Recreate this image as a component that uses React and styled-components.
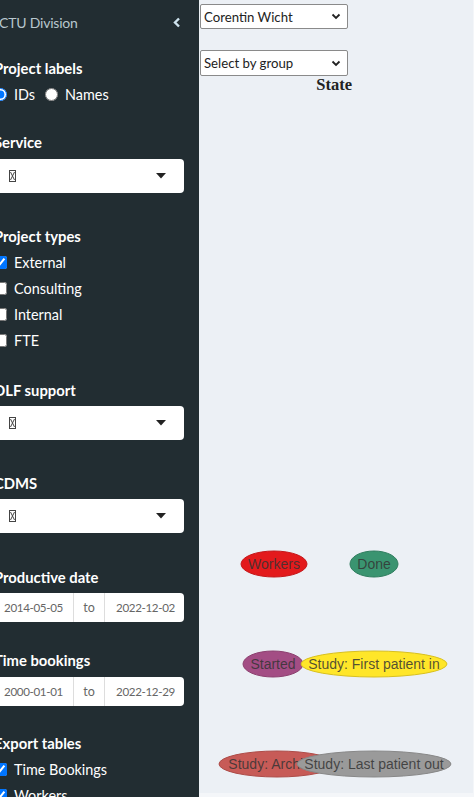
import React from "react";
import styled, { createGlobalStyle } from "styled-components";

const GlobalStyle = createGlobalStyle`
  html, body {
    margin: 0;
    padding: 0;
    background: #f4f6f9;
  }
  body {
    font-family: "Lato", "Open Sans", sans-serif;
    overflow: hidden;
  }
`;

const Page = styled.div`
  display: flex;
  width: 474px;
  height: 797px;
`;

const Sidebar = styled.aside`
  flex: 0 0 199px;
  height: 797px;
  background: #222d32;
  overflow: hidden;
`;

const SideHeader = styled.div`
  height: 45px;
  display: flex;
  align-items: center;
  justify-content: space-between;
  padding: 0 18px 0 0;
  margin-left: -1px;
  font-size: 14px;
  letter-spacing: -0.2px;
  color: #b8c7ce;
`;

const Form = styled.div`
  width: 190px;
  margin-left: -6px;
  display: flex;
  flex-direction: column;
`;

const Group = styled.div`
  margin-top: ${(p) => p.$top}px;
  display: flex;
  flex-direction: column;
`;

const Label = styled.div`
  font-size: 14.8px;
  font-weight: 700;
  line-height: 20px;
  color: #ffffff;
  margin-bottom: ${(p) => (p.$gap != null ? p.$gap : 6)}px;
`;

const RadioRow = styled.div`
  display: flex;
  align-items: center;
  height: 20px;
  gap: 10px;
`;

const Option = styled.label`
  display: flex;
  align-items: center;
  height: ${(p) => (p.$h ? p.$h : 26)}px;
  font-size: 14.4px;
  color: #ffffff;
  gap: 7px;

  input {
    width: 13px;
    height: 13px;
    margin: 0;
    accent-color: #0075ff;
  }
`;

const SelectBox = styled.div`
  height: 34px;
  background: #ffffff;
  border-radius: 4px;
  display: flex;
  align-items: center;
  justify-content: space-between;
  padding: 0 18px 0 15px;
  box-sizing: border-box;
`;

const DateRange = styled.div`
  height: 29px;
  display: flex;
  background: #ffffff;
  border-radius: 4px;
  overflow: hidden;
  font-size: 11.6px;
  letter-spacing: -0.35px;
  color: #666666;
`;

const DateInput = styled.div`
  flex: 0 0 ${(p) => p.$w}px;
  display: flex;
  align-items: center;
  justify-content: center;
`;

const DateSep = styled.div`
  flex: 0 0 30px;
  display: flex;
  align-items: center;
  justify-content: center;
  border-left: 1px solid #dddddd;
  border-right: 1px solid #dddddd;
  font-size: 12.5px;
  letter-spacing: 0;
`;

const Main = styled.main`
  flex: 0 0 273px;
  height: 793px;
  background: #ecf0f5;
  display: flex;
  flex-direction: column;
  padding-left: 1px;
  box-sizing: border-box;
`;

const NativeSelect = styled.div`
  width: 148px;
  height: ${(p) => p.$h}px;
  margin-top: ${(p) => p.$top}px;
  box-sizing: border-box;
  border: 1px solid #8a8a8a;
  border-radius: 2px;
  background: #ffffff;
  display: flex;
  align-items: center;
  justify-content: space-between;
  padding: 0 6px 0 3px;
  font-size: 13.2px;
  color: #222222;
`;

const Title = styled.div`
  font-family: "Liberation Serif", "DejaVu Serif", serif;
  font-weight: 700;
  font-size: 16.5px;
  color: #222222;
  width: 152px;
  text-align: right;
  line-height: 18px;
`;

const Canvas = styled.div`
  flex: 1;
  position: relative;
`;

const Tofu = () => (
  <svg width="7" height="12" viewBox="0 0 7 12">
    <rect x="0.5" y="0.5" width="6" height="11" fill="none" stroke="#444" strokeWidth="1" />
    <path d="M1.5 2 L5.5 10 M5.5 2 L1.5 10" stroke="#444" strokeWidth="1" />
  </svg>
);

const Caret = () => (
  <svg width="10" height="6" viewBox="0 0 10 6">
    <path d="M0 0 H10 L5 5.5 Z" fill="#222" />
  </svg>
);

const Chevron = () => (
  <svg width="10" height="7" viewBox="0 0 10 7">
    <path d="M1.5 1.5 L5 5 L8.5 1.5" fill="none" stroke="#222" strokeWidth="1.8" />
  </svg>
);

const Select = () => (
  <SelectBox>
    <Tofu />
    <Caret />
  </SelectBox>
);

const nodes = [
  { label: "Workers", cx: 74, cy: 470, rx: 33, fill: "#e31a1c", stroke: "#c4181a" },
  { label: "Done", cx: 174, cy: 470, rx: 24, fill: "#3a9470", stroke: "#2f7d5e" },
  { label: "Started", cx: 73, cy: 570, rx: 30, fill: "#a34d84", stroke: "#8c406f" },
  { label: "Study: First patient in", cx: 174, cy: 570, rx: 73, fill: "#ffe629", stroke: "#d8c020" },
  { label: "Study: Archived", cx: 77, cy: 670, rx: 58, fill: "#c75b57", stroke: "#ad4c48" },
  { label: "Study: Last patient out", cx: 174, cy: 670, rx: 77, fill: "#9a9a9a", stroke: "#888888" },
];

function Network() {
  return (
    <svg width="273" height="698" style={{ display: "block" }}>
      {nodes.map((n) => (
        <g key={n.label}>
          <ellipse cx={n.cx} cy={n.cy} rx={n.rx} ry={13} fill={n.fill} stroke={n.stroke} strokeWidth="1" />
          <text
            x={n.cx}
            y={n.cy + 5}
            textAnchor="middle"
            fontFamily="'Liberation Sans', Arial, sans-serif"
            fontSize="14"
            fill="#343434"
            fillOpacity="0.85"
          >
            {n.label}
          </text>
        </g>
      ))}
    </svg>
  );
}

export default function App() {
  return (
    <>
      <GlobalStyle />
      <Page>
        <Sidebar>
          <SideHeader>
            <span>CTU Division</span>
            <svg width="8" height="11" viewBox="0 0 8 11">
              <path d="M6 1.5 L2 5.5 L6 9.5" fill="none" stroke="#cfe3ee" strokeWidth="2.4" />
            </svg>
          </SideHeader>
          <Form>
            <Group $top={13}>
              <Label $gap={6}>Project labels</Label>
              <RadioRow>
                <Option $h={20}>
                  <input type="radio" name="labels" defaultChecked />
                  IDs
                </Option>
                <Option $h={20}>
                  <input type="radio" name="labels" />
                  Names
                </Option>
              </RadioRow>
            </Group>

            <Group $top={28}>
              <Label $gap={7}>Service</Label>
              <Select />
            </Group>

            <Group $top={33}>
              <Label $gap={3}>Project types</Label>
              <Option>
                <input type="checkbox" defaultChecked />
                External
              </Option>
              <Option>
                <input type="checkbox" />
                Consulting
              </Option>
              <Option>
                <input type="checkbox" />
                Internal
              </Option>
              <Option>
                <input type="checkbox" />
                FTE
              </Option>
            </Group>

            <Group $top={27}>
              <Label>DLF support</Label>
              <Select />
            </Group>

            <Group $top={33}>
              <Label>CDMS</Label>
              <Select />
            </Group>

            <Group $top={34}>
              <Label>Productive date</Label>
              <DateRange>
                <DateInput $w={79}>2014-05-05</DateInput>
                <DateSep>to</DateSep>
                <DateInput $w={81}>2022-12-02</DateInput>
              </DateRange>
            </Group>

            <Group $top={28}>
              <Label $gap={7}>Time bookings</Label>
              <DateRange>
                <DateInput $w={79}>2000-01-01</DateInput>
                <DateSep>to</DateSep>
                <DateInput $w={81}>2022-12-29</DateInput>
              </DateRange>
            </Group>

            <Group $top={27}>
              <Label $gap={3}>Export tables</Label>
              <Option>
                <input type="checkbox" defaultChecked />
                Time Bookings
              </Option>
              <Option>
                <input type="checkbox" defaultChecked />
                Workers
              </Option>
            </Group>
          </Form>
        </Sidebar>
        <Main>
          <NativeSelect $h={25} $top={4}>
            <span>Corentin Wicht</span>
            <Chevron />
          </NativeSelect>
          <NativeSelect $h={26} $top={21}>
            <span>Select by group</span>
            <Chevron />
          </NativeSelect>
          <Title>State</Title>
          <Canvas>
            <Network />
          </Canvas>
        </Main>
      </Page>
    </>
  );
}
